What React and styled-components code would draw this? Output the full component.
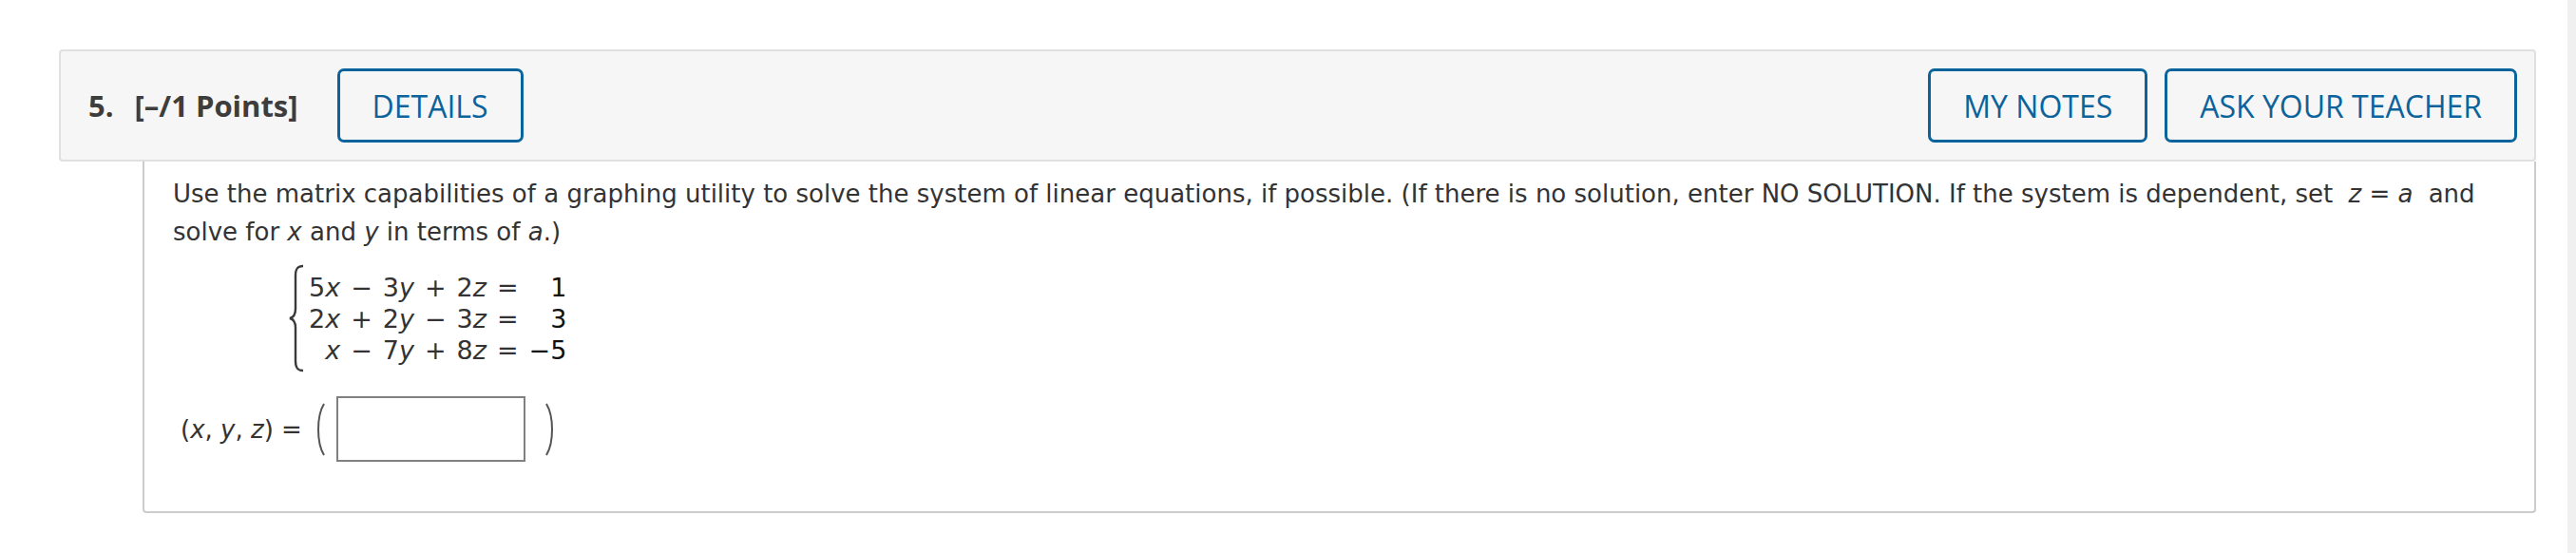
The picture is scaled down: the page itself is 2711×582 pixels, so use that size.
import React from "react";
import styled, { createGlobalStyle } from "styled-components";

const GlobalStyle = createGlobalStyle`
  html, body {
    margin: 0;
    padding: 0;
    background: #ffffff;
  }
  body {
    width: 2711px;
    height: 582px;
    overflow: hidden;
  }
`;

const equations = [
    ["5x", "−", "3y", "+", "2z", "=", "1"],
    ["2x", "+", "2y", "−", "3z", "=", "3"],
    ["x", "−", "7y", "+", "8z", "=", "−5"],
];

// splits "5x" into the number and the italic variable
const Term = ({ value }) => {
    const coef = value.slice(0, -1);
    const v = value.slice(-1);
    return (
        <>
            {coef}
            <I>{v}</I>
        </>
    );
};

const Brace = () => (
    <svg width="18" height="114" viewBox="0 0 18 114">
        <path
            d="M16 2 C10 2 8 5 8 12 L8 47 C8 53 6 56 2 57 C6 58 8 61 8 67 L8 102 C8 109 10 112 16 112"
            fill="none"
            stroke="#3a3a3a"
            strokeWidth="2.4"
        />
    </svg>
);

const Paren = ({ right }) => (
    <svg width="14" height="56" viewBox="0 0 14 56">
        <path
            d={right ? "M2 1 C10 14 10 42 2 55" : "M12 1 C4 14 4 42 12 55"}
            fill="none"
            stroke="#555"
            strokeWidth="2"
        />
    </svg>
);

const App = () => {
    return (
        <>
            <GlobalStyle />
            <St.Page>
                <St.Main>
                    <St.Header>
                        <St.Title>
                            <St.Number>5.</St.Number>
                            <span>[–/1 Points]</span>
                        </St.Title>
                        <St.Button $first>DETAILS</St.Button>
                        <St.Actions>
                            <St.Button>MY NOTES</St.Button>
                            <St.Button>ASK YOUR TEACHER</St.Button>
                        </St.Actions>
                    </St.Header>

                    <St.Body>
                        <St.Question>
                            Use the matrix capabilities of a graphing utility to solve the system of linear
                            equations, if possible. (If there is no solution, enter NO SOLUTION. If the system
                            is dependent, set <St.Math><I>z</I> = <I>a</I></St.Math> and solve for <I>x</I> and{" "}
                            <I>y</I> in terms of <I>a</I>.)
                        </St.Question>

                        <St.System>
                            <Brace />
                            <St.EqGrid>
                                {equations.map((row, r) =>
                                    row.map((cell, c) => (
                                        <St.Cell key={`${r}-${c}`} $op={c % 2 === 1} $rhs={c === 6}>
                                            {c % 2 === 0 && c < 6 ? <Term value={cell} /> : cell}
                                        </St.Cell>
                                    ))
                                )}
                            </St.EqGrid>
                        </St.System>

                        <St.AnswerRow>
                            <St.Label>
                                (<I>x</I>, <I>y</I>, <I>z</I>) =
                            </St.Label>
                            <St.ParenWrap $gap={11}>
                                <Paren />
                            </St.ParenWrap>
                            <St.Input type="text" />
                            <St.ParenWrap $gap={20}>
                                <Paren right />
                            </St.ParenWrap>
                        </St.AnswerRow>
                    </St.Body>
                </St.Main>
                <St.ScrollTrack />
            </St.Page>
        </>
    );
};

export default App;

const I = styled.i`
    font-style: italic;
`;

const St = {
    Page: styled.div`
        display: flex;
        width: 2711px;
        height: 582px;
    `,

    Main: styled.div`
        flex: 1;
        min-width: 0;
        padding: 52px 33px 0 62px;
    `,

    ScrollTrack: styled.div`
        width: 9px;
        background: #f0f0f0;
    `,

    Header: styled.div`
        display: flex;
        align-items: center;
        box-sizing: border-box;
        height: 118px;
        padding: 0 18px 0 29px;
        background: #f6f6f6;
        border: 2px solid #e0e0e0;
        border-radius: 4px;
    `,

    Title: styled.div`
        display: flex;
        align-items: baseline;
        font-family: "Open Sans", "Liberation Sans", sans-serif;
        font-size: 31px;
        font-weight: 700;
        color: #3d3d3d;
    `,

    Number: styled.span`
        margin-right: 22px;
    `,

    Actions: styled.div`
        display: flex;
        gap: 18px;
        margin-left: auto;
    `,

    Button: styled.button`
        box-sizing: border-box;
        height: 78px;
        margin-left: ${(p) => (p.$first ? "41px" : "0")};
        padding: 0 34px;
        background: transparent;
        border: 3px solid #0b639c;
        border-radius: 7px;
        color: #0b639c;
        font-family: "Open Sans", "Liberation Sans", sans-serif;
        font-size: 32px;
        font-weight: 400;
        cursor: pointer;
    `,

    Body: styled.div`
        margin-left: 88px;
        padding: 14px 30px 52px 30px;
        border: 2px solid #cccccc;
        border-top: none;
        border-radius: 0 0 4px 4px;
        font-family: Verdana, "DejaVu Sans", sans-serif;
        color: #333333;
    `,

    Question: styled.p`
        margin: 0;
        font-size: 26px;
        line-height: 40px;
    `,

    Math: styled.span`
        margin: 0 8px;
    `,

    System: styled.div`
        display: flex;
        align-items: center;
        margin: 14px 0 0 121px;
    `,

    EqGrid: styled.div`
        display: grid;
        grid-template-columns: repeat(7, auto);
        column-gap: 11px;
        margin-left: 4px;
        font-size: 27px;
        line-height: 33px;
    `,

    Cell: styled.span`
        text-align: ${(p) => (p.$op ? "center" : "right")};
        color: ${(p) => (p.$rhs ? "#111" : "#333")};
        white-space: nowrap;
    `,

    AnswerRow: styled.div`
        display: flex;
        align-items: center;
        margin: 25px 0 0 8px;
    `,

    Label: styled.span`
        font-size: 26px;
        white-space: pre;
    `,

    ParenWrap: styled.span`
        display: flex;
        margin-left: ${(p) => p.$gap}px;
    `,

    Input: styled.input`
        box-sizing: border-box;
        width: 199px;
        height: 69px;
        margin: 0 0 0 11px;
        border: 2px solid #808080;
        background: #ffffff;
        outline: none;
    `,
};
